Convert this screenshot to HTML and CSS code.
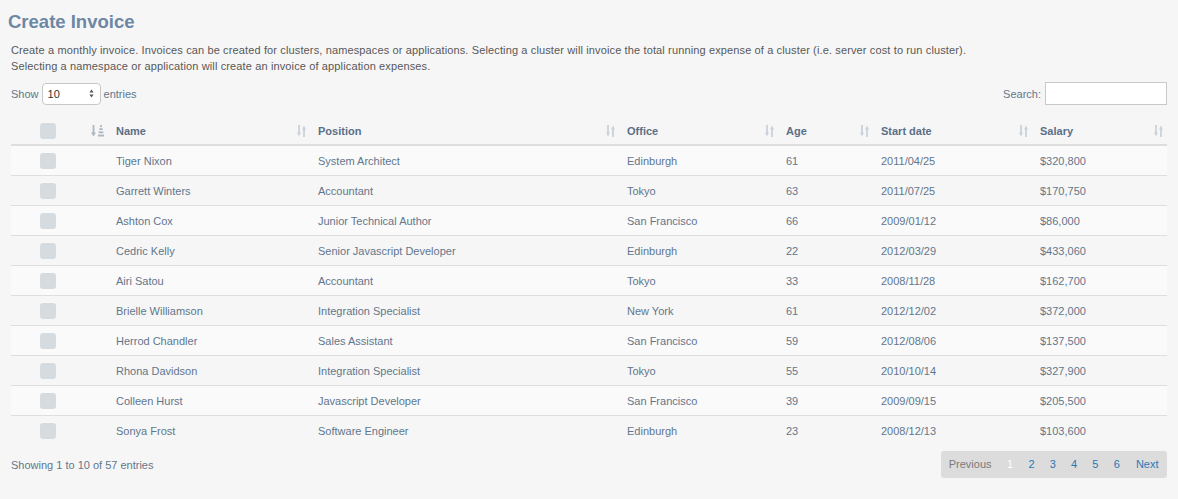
FILE: index.html
```html
<!DOCTYPE html>
<html>
<head>
<meta charset="utf-8">
<link rel="stylesheet" href="styles.css">
</head>
<body>
<div class="page">
  <h1 class="title">Create Invoice</h1>
  <p class="desc">Create a monthly invoice. Invoices can be created for clusters, namespaces or applications. Selecting a cluster will invoice the total running expense of a cluster (i.e. server cost to run cluster).<br>Selecting a namespace or application will create an invoice of application expenses.</p>
  <div class="controls">
    <div class="length">
      <span>Show</span>
      <div class="select"><span>10</span>
        <svg width="5" height="9" viewBox="0 0 5 9"><path d="M2.5 0.5 L4.6 3.6 H0.4 Z M2.5 8.5 L4.6 5.4 H0.4 Z" fill="#555"/></svg>
      </div>
      <span>entries</span>
    </div>
    <div class="search">
      <span>Search:</span>
      <div class="input"></div>
    </div>
  </div>
  <table class="grid">
    <colgroup>
      <col style="width:97px"><col style="width:202px"><col style="width:309px"><col style="width:159px"><col style="width:95px"><col style="width:159px"><col style="width:135px">
    </colgroup>
    <thead>
      <tr>
        <th class="chk"><div class="th"><span class="box"></span>
          <svg class="sort" width="13" height="12" viewBox="0 0 13 12"><path d="M2.5 0 V8" stroke="#aeb8c3" stroke-width="1.8"/><path d="M0 7.5 H5 L2.5 11.5 Z" fill="#aeb8c3"/><rect x="7" y="9.6" width="6" height="1.9" fill="#aeb8c3"/><rect x="7.7" y="6.4" width="4.6" height="1.9" fill="#aeb8c3"/><rect x="8.4" y="3.2" width="3.2" height="1.9" fill="#aeb8c3"/><rect x="9.1" y="0" width="1.8" height="2.2" fill="#aeb8c3"/></svg></div></th>
        <th><div class="th"><span>Name</span><svg class="sort" width="9" height="12" viewBox="0 0 9 12"><path d="M2 0 V8.5" stroke="#cbd2d9" stroke-width="1.8"/><path d="M0 7.5 H4 L2 11.5 Z" fill="#cbd2d9"/><path d="M7 12 V3.5" stroke="#cbd2d9" stroke-width="1.8"/><path d="M5 4.5 H9 L7 0.5 Z" fill="#cbd2d9"/></svg></div></th>
        <th><div class="th"><span>Position</span><svg class="sort" width="9" height="12" viewBox="0 0 9 12"><path d="M2 0 V8.5" stroke="#cbd2d9" stroke-width="1.8"/><path d="M0 7.5 H4 L2 11.5 Z" fill="#cbd2d9"/><path d="M7 12 V3.5" stroke="#cbd2d9" stroke-width="1.8"/><path d="M5 4.5 H9 L7 0.5 Z" fill="#cbd2d9"/></svg></div></th>
        <th><div class="th"><span>Office</span><svg class="sort" width="9" height="12" viewBox="0 0 9 12"><path d="M2 0 V8.5" stroke="#cbd2d9" stroke-width="1.8"/><path d="M0 7.5 H4 L2 11.5 Z" fill="#cbd2d9"/><path d="M7 12 V3.5" stroke="#cbd2d9" stroke-width="1.8"/><path d="M5 4.5 H9 L7 0.5 Z" fill="#cbd2d9"/></svg></div></th>
        <th><div class="th"><span>Age</span><svg class="sort" width="9" height="12" viewBox="0 0 9 12"><path d="M2 0 V8.5" stroke="#cbd2d9" stroke-width="1.8"/><path d="M0 7.5 H4 L2 11.5 Z" fill="#cbd2d9"/><path d="M7 12 V3.5" stroke="#cbd2d9" stroke-width="1.8"/><path d="M5 4.5 H9 L7 0.5 Z" fill="#cbd2d9"/></svg></div></th>
        <th><div class="th"><span>Start date</span><svg class="sort" width="9" height="12" viewBox="0 0 9 12"><path d="M2 0 V8.5" stroke="#cbd2d9" stroke-width="1.8"/><path d="M0 7.5 H4 L2 11.5 Z" fill="#cbd2d9"/><path d="M7 12 V3.5" stroke="#cbd2d9" stroke-width="1.8"/><path d="M5 4.5 H9 L7 0.5 Z" fill="#cbd2d9"/></svg></div></th>
        <th><div class="th"><span>Salary</span><svg class="sort" width="9" height="12" viewBox="0 0 9 12"><path d="M2 0 V8.5" stroke="#cbd2d9" stroke-width="1.8"/><path d="M0 7.5 H4 L2 11.5 Z" fill="#cbd2d9"/><path d="M7 12 V3.5" stroke="#cbd2d9" stroke-width="1.8"/><path d="M5 4.5 H9 L7 0.5 Z" fill="#cbd2d9"/></svg></div></th>
      </tr>
    </thead>
    <tbody>
      <tr><td class="chk"><span class="box"></span></td><td>Tiger Nixon</td><td>System Architect</td><td>Edinburgh</td><td>61</td><td>2011/04/25</td><td>$320,800</td></tr>
      <tr><td class="chk"><span class="box"></span></td><td>Garrett Winters</td><td>Accountant</td><td>Tokyo</td><td>63</td><td>2011/07/25</td><td>$170,750</td></tr>
      <tr><td class="chk"><span class="box"></span></td><td>Ashton Cox</td><td>Junior Technical Author</td><td>San Francisco</td><td>66</td><td>2009/01/12</td><td>$86,000</td></tr>
      <tr><td class="chk"><span class="box"></span></td><td>Cedric Kelly</td><td>Senior Javascript Developer</td><td>Edinburgh</td><td>22</td><td>2012/03/29</td><td>$433,060</td></tr>
      <tr><td class="chk"><span class="box"></span></td><td>Airi Satou</td><td>Accountant</td><td>Tokyo</td><td>33</td><td>2008/11/28</td><td>$162,700</td></tr>
      <tr><td class="chk"><span class="box"></span></td><td>Brielle Williamson</td><td>Integration Specialist</td><td>New York</td><td>61</td><td>2012/12/02</td><td>$372,000</td></tr>
      <tr><td class="chk"><span class="box"></span></td><td>Herrod Chandler</td><td>Sales Assistant</td><td>San Francisco</td><td>59</td><td>2012/08/06</td><td>$137,500</td></tr>
      <tr><td class="chk"><span class="box"></span></td><td>Rhona Davidson</td><td>Integration Specialist</td><td>Tokyo</td><td>55</td><td>2010/10/14</td><td>$327,900</td></tr>
      <tr><td class="chk"><span class="box"></span></td><td>Colleen Hurst</td><td>Javascript Developer</td><td>San Francisco</td><td>39</td><td>2009/09/15</td><td>$205,500</td></tr>
      <tr><td class="chk"><span class="box"></span></td><td>Sonya Frost</td><td>Software Engineer</td><td>Edinburgh</td><td>23</td><td>2008/12/13</td><td>$103,600</td></tr>
    </tbody>
  </table>
  <div class="footer">
    <div class="info">Showing 1 to 10 of 57 entries</div>
    <div class="pager">
      <span class="pg prev">Previous</span>
      <span class="pg num cur">1</span>
      <span class="pg num">2</span>
      <span class="pg num">3</span>
      <span class="pg num">4</span>
      <span class="pg num">5</span>
      <span class="pg num">6</span>
      <span class="pg next">Next</span>
    </div>
  </div>
</div>
</body>
</html>
```
FILE: styles.css
```css
html, body {
  margin: 0;
  padding: 0;
  background: #f6f6f6;
}
body {
  font-family: "Liberation Sans", Arial, sans-serif;
  font-size: 11px;
  color: #62768c;
}
.page {
  padding: 12px 11px 0 11px;
}
.title {
  margin: 0 0 0 -3px;
  font-size: 18.5px;
  line-height: 20px;
  font-weight: bold;
  color: #6d87a4;
}
.desc {
  margin: 10px 0 0 0;
  line-height: 16px;
  letter-spacing: 0.13px;
  color: #585858;
}
.controls {
  display: flex;
  justify-content: space-between;
  align-items: center;
  margin-top: 8px;
  height: 23px;
}
.length {
  display: flex;
  align-items: center;
  gap: 3px;
}
.select {
  width: 59px;
  height: 22px;
  box-sizing: border-box;
  border: 1px solid #c8c8c8;
  border-radius: 4px;
  background: #fff;
  display: flex;
  align-items: center;
  justify-content: space-between;
  padding: 0 6px 0 5px;
  color: #333;
  font-size: 11px;
}
.search {
  display: flex;
  align-items: center;
  gap: 4px;
}
.input {
  width: 122px;
  height: 23px;
  box-sizing: border-box;
  border: 1px solid #c9c9c9;
  background: #fff;
}
.grid {
  margin-top: 11px;
  width: 1156px;
  border-collapse: collapse;
  table-layout: fixed;
}
.grid th {
  height: 26px;
  padding: 2px 4px 0 8px;
  text-align: left;
  font-weight: bold;
  color: #5b6f87;
  border-bottom: 2px solid #dedede;
}
.th {
  display: flex;
  align-items: center;
  justify-content: space-between;
}
.grid th.chk {
  padding-left: 29px;
}
.grid td {
  height: 29px;
  padding: 0 8px;
  border-bottom: 1px solid #dedede;
  white-space: nowrap;
}
.grid td.chk {
  padding-left: 29px;
}
.grid tbody tr:nth-child(odd) {
  background: #fafafa;
}
.grid tbody tr:last-child td {
  border-bottom: none;
}
.box {
  display: block;
  width: 16px;
  height: 16px;
  border-radius: 3px;
  background: #d6dbdf;
}
.sort {
  display: block;
}
.footer {
  display: flex;
  justify-content: space-between;
  align-items: center;
  margin-top: 6px;
}
.pager {
  display: flex;
  align-items: center;
  height: 27px;
  background: #dcdcdc;
  border-radius: 3px;
}
.pg {
  line-height: 27px;
  color: #2a78b6;
}
.prev {
  padding: 0 8px;
  color: #7a7a7a;
}
.next {
  padding: 0 8.5px;
}
.num {
  padding: 0 7.6px;
}
.cur {
  color: #fff;
}
```
